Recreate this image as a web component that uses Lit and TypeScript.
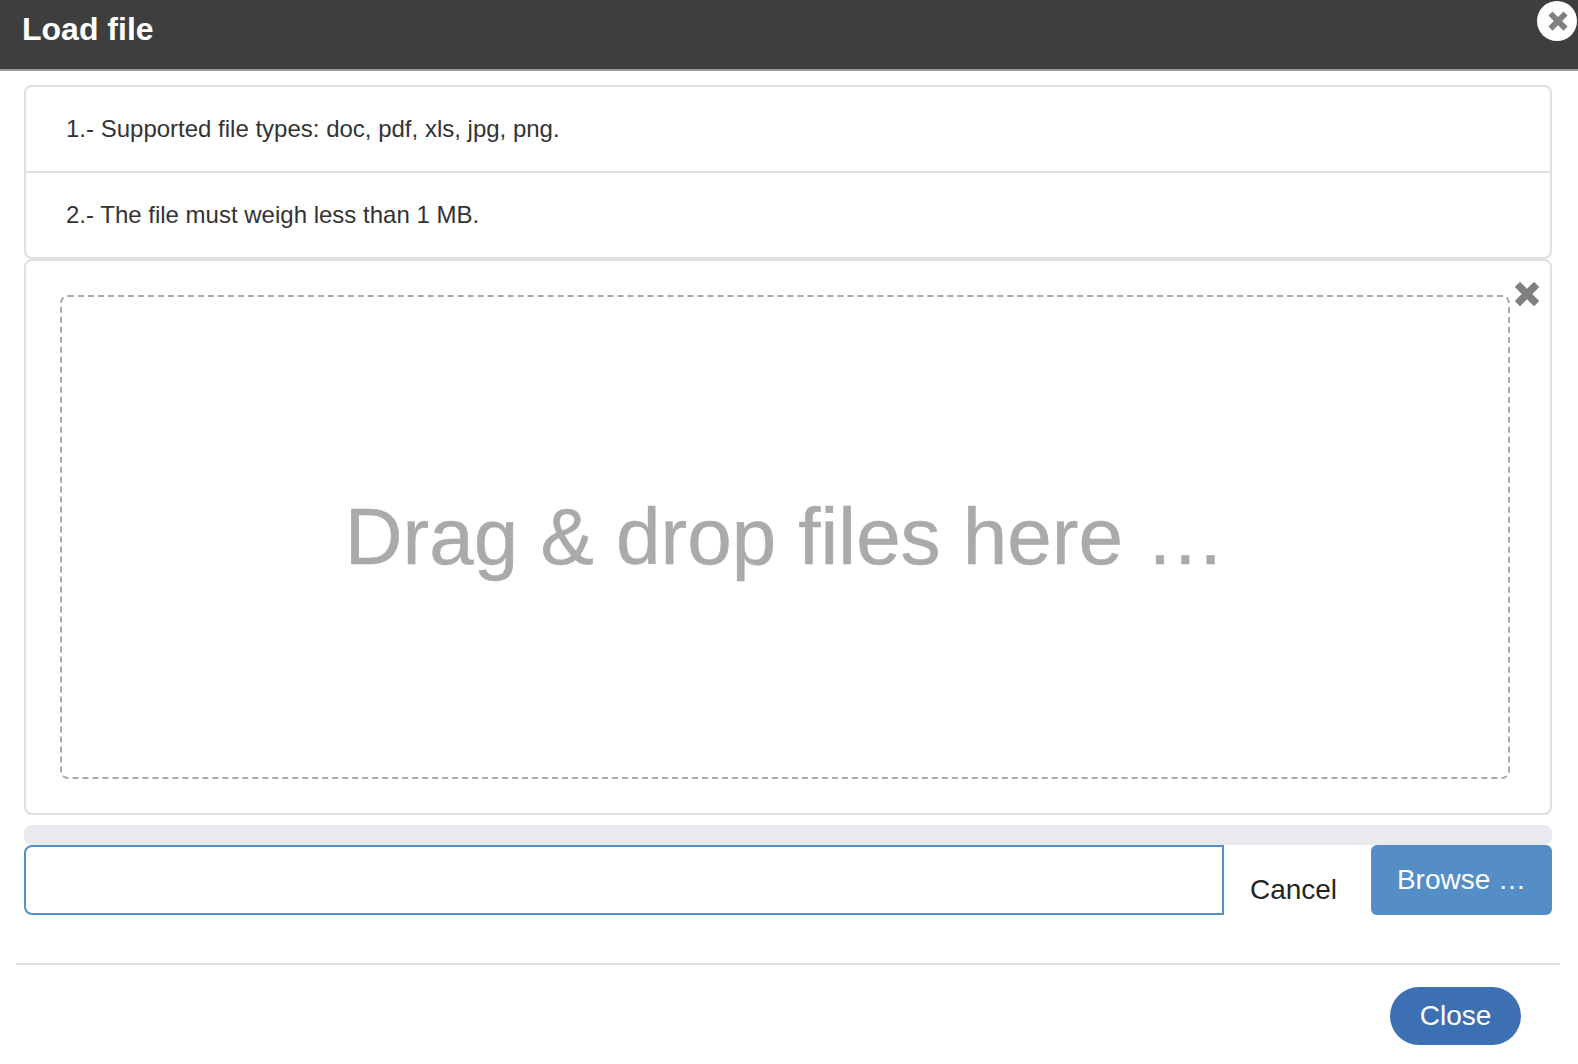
import { LitElement, html, css } from "lit";
import { customElement } from "lit/decorators.js";

const cross = (cls: string) => html`<svg class=${cls} viewBox="0 0 24 24" aria-hidden="true"><path d="M6 1.5 12 7.5 18 1.5 22.5 6 16.5 12 22.5 18 18 22.5 12 16.5 6 22.5 1.5 18 7.5 12 1.5 6Z"></path></svg>`;

@customElement("app-root")
export class AppRoot extends LitElement {
  static styles = css`
    :host { display: block; width: 1578px; height: 1064px; overflow: hidden; background: #fff; font-family: "Liberation Sans", Arial, sans-serif; color: #333; }
    .header { height: 69px; background: #3e3e3e; border-bottom: 2px solid #9a9a9a; display: flex; align-items: center; padding-left: 22px; position: relative; }
    .title { color: #fff; font-size: 32px; font-weight: 700; line-height: 58px; align-self: flex-start; }
    .modal-x { position: absolute; top: 1px; left: 1537px; width: 40px; height: 40px; border-radius: 50%; background: #fff; display: flex; align-items: center; justify-content: center; }
    .ix { fill: #808080; }
    .modal-x .ix { width: 22px; height: 22px; margin-left: 2px; }
    .body { padding: 14px 26px 0 24px; display: flex; flex-direction: column; }
    .list { border: 2px solid #e0e0e0; border-radius: 8px; }
    .item { height: 84px; padding-left: 40px; display: flex; align-items: center; font-size: 24px; color: #333; }
    .item + .item { border-top: 2px solid #e0e0e0; height: 83px; padding-bottom: 1px; }
    .zone { height: 556px; box-sizing: border-box; border: 2px solid #e0e0e0; border-radius: 8px; padding: 34px 40px 34px 34px; position: relative; display: flex; }
    .drop { flex: 1; border: 2px dashed #aaa; border-radius: 8px; display: flex; align-items: center; justify-content: center; color: #aaa; font-size: 80px; -webkit-text-stroke: 0.5px #aaa; }
    .zone-x { position: absolute; top: 19px; right: 9px; width: 28px; height: 28px; }
    .bar { margin-top: 10px; height: 20px; background: #e9eaed; border-radius: 8px; }
    .controls { display: flex; height: 70px; }
    .input { width: 1200px; box-sizing: border-box; border: 2px solid #5490c8; border-radius: 8px 0 0 8px; }
    .cancel { width: 147px; box-sizing: border-box; padding-right: 8px; text-align: center; font-size: 28px; color: #212529; line-height: 90px; }
    .browse { flex: 1; background: #558dc6; color: #fff; border-radius: 6px; font-size: 28px; text-align: center; line-height: 70px; }
    .rule { margin: 48px -8px 0; height: 2px; background: #dedede; }
    .footer { display: flex; justify-content: flex-end; padding: 22px 31px 0 0; }
    .close { width: 131px; height: 58px; border-radius: 29px; background: #3d70b2; color: #fff; font-size: 28px; line-height: 58px; text-align: center; }
  `;

  render() {
    return html`
      <div class="header">
        <div class="title">Load file</div>
        <div class="modal-x">${cross("ix")}</div>
      </div>
      <div class="body">
        <div class="list">
          <div class="item">1.- Supported file types: doc, pdf, xls, jpg, png.</div>
          <div class="item">2.- The file must weigh less than 1 MB.</div>
        </div>
        <div class="zone">
          <div class="drop">Drag &amp; drop files here …</div>
          <div class="zone-x">${cross("ix")}</div>
        </div>
        <div class="bar"></div>
        <div class="controls">
          <div class="input"></div>
          <div class="cancel">Cancel</div>
          <div class="browse">Browse …</div>
        </div>
        <div class="rule"></div>
        <div class="footer"><div class="close">Close</div></div>
      </div>
    `;
  }
}
